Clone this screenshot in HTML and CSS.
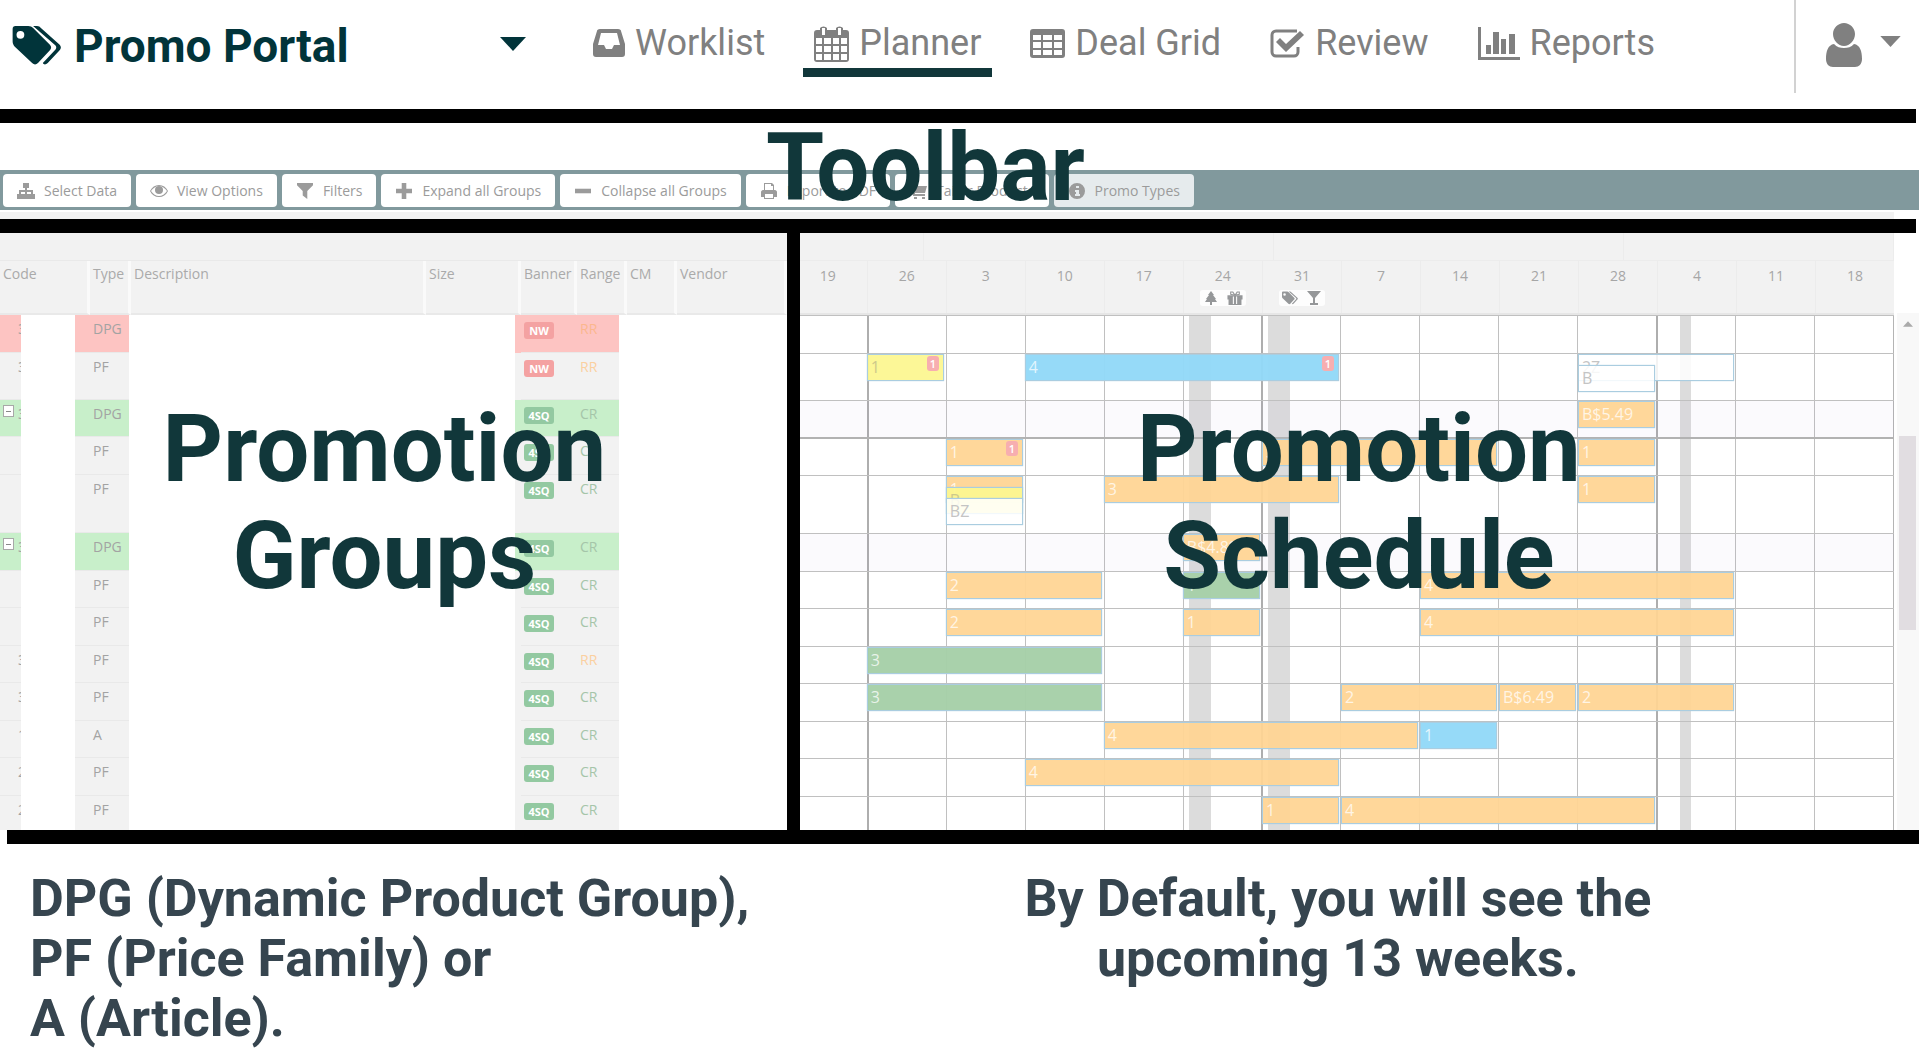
FILE: index.html
```html
<!DOCTYPE html>
<html lang="en">

<head>
    <meta charset="UTF-8">
    <meta name="viewport" content="width=device-width, initial-scale=1.0">
    <title>Promo Portal - Planner</title>
    <link rel="stylesheet" href="styles.css">
</head>

<body>
    <!-- Shared icons -->
    <svg class="sprite" aria-hidden="true">
        <symbol id="tags" viewBox="0 0 50 40">
            <path fill-rule="evenodd" d="M3 0h13c2 0 4 1 5 2l17 17c2 2 2 4 0 6L26 38c-2 2-4 2-6 0L2 21c-1-1-2-3-2-5V3c0-2 1-3 3-3zm5 5a4 4 0 1 0 0 8 4 4 0 0 0 0-8z" />
            <path d="M21 0h4c2 0 3 1 4 2l19 17c2 2 2 4 0 6L36 38c-2 2-4 2-5 0l13-14c1-1 1-3 0-4z" />
        </symbol>
        <symbol id="caret" viewBox="0 0 26 14"><path d="M0 0h26L13 14z" /></symbol>
        <symbol id="inbox" viewBox="0 0 32 28">
            <path fill-rule="evenodd" d="M7 0h18c2 0 3 1 3 2l4 13v10c0 2-1 3-3 3H3c-2 0-3-1-3-3V15L4 2c0-1 1-2 3-2zm1 4L5 16h6l2 4h6l2-4h6L24 4z" />
        </symbol>
        <symbol id="calendar" viewBox="0 0 35 37">
            <path fill-rule="evenodd" d="M3 5h3V3a4 3 0 0 1 7 0v2h9V3a4 3 0 0 1 7 0v2h3c2 0 3 1 3 3v26c0 2-1 3-3 3H3c-2 0-3-1-3-3V8c0-2 1-3 3-3zm5-2v7h3V3zm16 0v7h3V3zM2 13v6h6v-6zm8 0v6h7v-6zm9 0v6h6v-6zm8 0v6h6v-6zM2 21v6h6v-6zm8 0v6h7v-6zm9 0v6h6v-6zm8 0v6h6v-6zM2 29v6h6v-6zm8 0v6h7v-6zm9 0v6h6v-6zm8 0v6h6v-6z" />
        </symbol>
        <symbol id="grid" viewBox="0 0 35 29">
            <path fill-rule="evenodd" d="M3 0h29c2 0 3 1 3 3v23c0 2-1 3-3 3H3c-2 0-3-1-3-3V3c0-2 1-3 3-3zm0 6v5h8V6zm10 0v5h9V6zm11 0v5h8V6zM3 13v6h8v-6zm10 0v6h9v-6zm11 0v6h8v-6zM3 21v5h8v-5zm10 0v5h9v-5zm11 0v5h8v-5z" />
        </symbol>
        <symbol id="check" viewBox="0 0 35 29">
            <path d="M27 2H6a4 4 0 0 0-4 4v17a4 4 0 0 0 4 4h18a4 4 0 0 0 4-4v-5" fill="none" stroke="currentColor" stroke-width="3" />
            <path d="M6 13l4-4 6 6L30 2l4 4-18 17z" />
        </symbol>
        <symbol id="bars" viewBox="0 0 42 33">
            <path d="M0 0h3v30h39v3H0zM8 18h5v9H8zM15 5h6v22h-6zM23 12h5v15h-5zM31 7h6v20h-6z" />
        </symbol>
        <symbol id="user" viewBox="0 0 36 44">
            <path d="M18 0c6 0 11 5 11 11s-5 12-11 12S7 17 7 11 12 0 18 0zM8 21c3 3 6 4 10 4s7-1 10-4c6 1 8 7 8 15 0 5-3 8-7 8H7c-4 0-7-3-7-8 0-8 2-14 8-15z" />
        </symbol>
        <symbol id="sitemap" viewBox="0 0 18 16">
            <path d="M6 0h6v5h-2v2h6v4h2v5h-6v-5h2V9h-4v2h2v5H6v-5h2V9H4v2h2v5H0v-5h2V7h6V5H6z" />
        </symbol>
        <symbol id="eye" viewBox="0 0 18 14">
            <path fill-rule="evenodd" d="M9 1c4 0 7 2 9 6-2 4-5 6-9 6S2 11 0 7c2-4 5-6 9-6zm0 1C6 2 3 4 1 7c2 3 5 5 8 5s6-2 8-5c-2-3-5-5-8-5z" />
            <circle cx="9" cy="6" r="4" />
        </symbol>
        <symbol id="filter" viewBox="0 0 14 14"><path d="M0 0h14v2L9 7v7l-4-3V7L0 2z" /></symbol>
        <symbol id="plus" viewBox="0 0 14 14"><path d="M5 0h4v5h5v4H9v5H5V9H0V5h5z" /></symbol>
        <symbol id="minus" viewBox="0 0 14 14"><path d="M0 5h14v4H0z" /></symbol>
        <symbol id="print" viewBox="0 0 16 16">
            <path fill-rule="evenodd" d="M3 0h8l2 2v5h1c1 0 2 1 2 2v5h-3v2H3v-2H0V9c0-1 1-2 2-2h1zm1 1v6h8V3h-2V1zm0 10v4h8v-4z" />
        </symbol>
        <symbol id="cart" viewBox="0 0 18 16">
            <path d="M0 1h4l1 2h13l-2 7H6v1h10v2H4L3 3H0zM5 14h3v2H5zM13 14h3v2h-3z" />
        </symbol>
        <symbol id="info" viewBox="0 0 16 16">
            <path fill-rule="evenodd" d="M8 0a8 8 0 1 0 0 16A8 8 0 0 0 8 0zM7 3h3v2H7zM6 7h4v4h1v2H6v-2h1V9H6z" />
        </symbol>
        <symbol id="tree" viewBox="0 0 12 14"><path d="M6 0l3 4H8l3 4h-1l2 3H7v3H5v-3H0l2-3H1l3-4H3z" /></symbol>
        <symbol id="gift" viewBox="0 0 14 13">
            <path fill-rule="evenodd" d="M0 4h14v4h-1v5H1V8H0zm5 1v7h1V5zm3 0v7h1V5z" />
            <path d="M7 4L5 1H3v2l4 1 4-1V1H9z" fill="none" stroke="currentColor" />
        </symbol>
        <symbol id="glass" viewBox="0 0 14 14"><path d="M0 0h14L8 7v5h3v2H3v-2h3V7z" /></symbol>
    </svg>

    <header class="navbar">
        <a class="brand" href="#"><svg class="i-brand"><use href="#tags" /></svg>Promo Portal</a>
        <button class="brand-menu" aria-label="Switch portal"><svg class="i-caret"><use href="#caret" /></svg></button>
        <nav class="nav">
            <a href="#"><svg class="i-inbox"><use href="#inbox" /></svg>Worklist</a>
            <a href="#" class="active"><svg class="i-calendar"><use href="#calendar" /></svg>Planner</a>
            <a href="#"><svg class="i-grid"><use href="#grid" /></svg>Deal Grid</a>
            <a href="#"><svg class="i-grid"><use href="#check" /></svg>Review</a>
            <a href="#"><svg class="i-bars"><use href="#bars" /></svg>Reports</a>
        </nav>
        <button class="user-menu" aria-label="Account">
            <svg class="i-user"><use href="#user" /></svg>
            <svg class="i-user-caret"><use href="#caret" /></svg>
        </button>
    </header>
    <hr>

    <section class="toolbar-section">
        <div class="toolbar">
            <button><svg><use href="#sitemap" /></svg>Select Data</button>
            <button><svg><use href="#eye" /></svg>View Options</button>
            <button><svg><use href="#filter" /></svg>Filters</button>
            <button><svg><use href="#plus" /></svg>Expand all Groups</button>
            <button><svg><use href="#minus" /></svg>Collapse all Groups</button>
            <button><svg><use href="#print" /></svg>Export to PDF</button>
            <button><svg><use href="#cart" /></svg>Tailor Products</button>
            <button class="pressed"><svg><use href="#info" /></svg>Promo Types</button>
        </div>
        <h2 class="callout callout-toolbar">Toolbar</h2>
    </section>
    <hr>

    <main class="planner">
        <section class="groups">
            <table>
                <colgroup>
                    <col class="c-code"><col class="c-type"><col class="c-desc"><col class="c-size">
                    <col class="c-banner"><col class="c-range"><col class="c-cm"><col>
                </colgroup>
                <thead>
                    <tr class="months"><td colspan="8"></td></tr>
                    <tr>
                        <th>Code</th><th>Type</th><th>Description</th><th>Size</th>
                        <th>Banner</th><th>Range</th><th>CM</th><th>Vendor</th>
                    </tr>
                </thead>
                <tbody>
                    <tr class="red first"><td class="code"><span>3</span></td><td class="type">DPG</td><td></td><td class="size"></td><td class="banner"><b class="nw">NW</b></td><td class="range rr">RR</td><td></td><td></td></tr>
                    <tr class="tall"><td class="code"><span>3</span></td><td class="type">PF</td><td></td><td class="size"></td><td class="banner"><b class="nw">NW</b></td><td class="range rr">RR</td><td></td><td></td></tr>
                    <tr class="green"><td class="code"><button class="toggle" aria-label="Collapse group"></button><span>3</span></td><td class="type">DPG</td><td></td><td class="size"></td><td class="banner"><b>4SQ</b></td><td class="range">CR</td><td></td><td></td></tr>
                    <tr><td class="code"></td><td class="type">PF</td><td></td><td class="size"></td><td class="banner"><b>4SQ</b></td><td class="range">CR</td><td></td><td></td></tr>
                    <tr class="taller"><td class="code"></td><td class="type">PF</td><td></td><td class="size"></td><td class="banner"><b>4SQ</b></td><td class="range">CR</td><td></td><td></td></tr>
                    <tr class="green"><td class="code"><button class="toggle" aria-label="Collapse group"></button><span>3</span></td><td class="type">DPG</td><td></td><td class="size"></td><td class="banner"><b>4SQ</b></td><td class="range">CR</td><td></td><td></td></tr>
                    <tr><td class="code"></td><td class="type">PF</td><td></td><td class="size"></td><td class="banner"><b>4SQ</b></td><td class="range">CR</td><td></td><td></td></tr>
                    <tr><td class="code"></td><td class="type">PF</td><td></td><td class="size"></td><td class="banner"><b>4SQ</b></td><td class="range">CR</td><td></td><td></td></tr>
                    <tr><td class="code"><span>3</span></td><td class="type">PF</td><td></td><td class="size"></td><td class="banner"><b>4SQ</b></td><td class="range rr">RR</td><td></td><td></td></tr>
                    <tr><td class="code"><span>3</span></td><td class="type">PF</td><td></td><td class="size"></td><td class="banner"><b>4SQ</b></td><td class="range">CR</td><td></td><td></td></tr>
                    <tr><td class="code"><span>1</span></td><td class="type">A</td><td></td><td class="size"></td><td class="banner"><b>4SQ</b></td><td class="range">CR</td><td></td><td></td></tr>
                    <tr><td class="code"><span>2</span></td><td class="type">PF</td><td></td><td class="size"></td><td class="banner"><b>4SQ</b></td><td class="range">CR</td><td></td><td></td></tr>
                    <tr><td class="code"><span>2</span></td><td class="type">PF</td><td></td><td class="size"></td><td class="banner"><b>4SQ</b></td><td class="range">CR</td><td></td><td></td></tr>
                </tbody>
            </table>
            <h2 class="callout">Promotion<br>Groups</h2>
        </section>

        <section class="schedule">
            <div class="timeline">
                <div class="month-row"><span></span><span></span><span></span><span></span></div>
                <div class="weeks">
                    <div>19</div>
                    <div>26</div>
                    <div>3</div>
                    <div>10</div>
                    <div>17</div>
                    <div>24<p><svg><use href="#tree" /></svg><svg><use href="#gift" /></svg></p></div>
                    <div>31<p><svg><use href="#tags" /></svg><svg><use href="#glass" /></svg></p></div>
                    <div>7</div>
                    <div>14</div>
                    <div>21</div>
                    <div>28</div>
                    <div>4</div>
                    <div>11</div>
                    <div>18</div>
                </div>
                <div class="chart">
                    <!-- Week lines and holiday bands -->
                    <div class="lines">
                        <i></i><i class="month"></i><i></i><i></i><i></i><i><s></s></i><i class="month"><s></s></i>
                        <i></i><i></i><i></i><i></i><i class="month"><s class="late"></s></i><i></i><i></i>
                    </div>
                    <div class="row"></div>
                    <div class="row">
                        <div class="bar yellow w2">1<em>1</em></div>
                        <div class="bar blue w4 s4">4<em>1</em></div>
                        <div class="bar white w11 s2">2Z</div>
                        <div class="bar white w11 drop1">B</div>
                    </div>
                    <div class="row group">
                        <div class="bar w11">B$5.49</div>
                    </div>
                    <div class="row strong">
                        <div class="bar w3">1<em>1</em></div>
                        <div class="bar w7 s3">3</div>
                        <div class="bar w11">1</div>
                    </div>
                    <div class="row">
                        <div class="bar w3">1</div>
                        <div class="bar yellow w3 drop1">B</div>
                        <div class="bar white w3 drop2">BZ</div>
                        <div class="bar w5 s3">3</div>
                        <div class="bar w11">1</div>
                    </div>
                    <div class="row group">
                        <div class="bar w6">B$4.89</div>
                    </div>
                    <div class="row">
                        <div class="bar w3 s2">2</div>
                        <div class="bar green w6">1</div>
                        <div class="bar w9 s4">4</div>
                    </div>
                    <div class="row">
                        <div class="bar w3 s2">2</div>
                        <div class="bar w6">1</div>
                        <div class="bar w9 s4">4</div>
                    </div>
                    <div class="row">
                        <div class="bar green w2 s3">3</div>
                    </div>
                    <div class="row">
                        <div class="bar green w2 s3">3</div>
                        <div class="bar w8 s2">2</div>
                        <div class="bar w10">B$6.49</div>
                        <div class="bar w11 s2">2</div>
                    </div>
                    <div class="row">
                        <div class="bar w5 s4">4</div>
                        <div class="bar blue w9">1</div>
                    </div>
                    <div class="row">
                        <div class="bar w4 s4">4</div>
                    </div>
                    <div class="row">
                        <div class="bar w7">1</div>
                        <div class="bar w8 s4">4</div>
                    </div>
                </div>
            </div>
            <div class="scrollbar"><svg><use href="#caret" /></svg><div class="thumb"></div></div>
            <h2 class="callout">Promotion<br>Schedule</h2>
        </section>
    </main>
    <hr class="bottom">

    <footer class="notes">
        <p>DPG (Dynamic Product Group),<br>PF (Price Family) or<br>A (Article).</p>
        <p class="centered">By Default, you will see the<br>upcoming 13 weeks.</p>
    </footer>
</body>

</html>
```
FILE: styles.css
```css
* {
    box-sizing: border-box;
}

body {
    margin: 0;
    background-color: #fff;
    font-family: "Open Sans", "Noto Sans", sans-serif;
    font-size: 14px;
    color: #a3a3a3;
    overflow-x: hidden;
}

button {
    border: none;
    background: none;
    padding: 0;
    font: inherit;
    color: inherit;
    cursor: pointer;
}

a {
    color: inherit;
    text-decoration: none;
}

svg {
    fill: currentColor;
    display: block;
}

hr {
    height: 14px;
    margin: 0 3px 0 0;
    border: none;
    background-color: #000;
}

hr.bottom {
    margin: 0 0 0 7px;
}

.sprite {
    position: absolute;
    width: 0;
    height: 0;
}

/* Navigation */
.navbar {
    display: flex;
    align-items: flex-start;
    height: 109px;
    font-family: Roboto, sans-serif;
    color: #808080;
}

.brand {
    display: flex;
    align-items: center;
    gap: 12px;
    width: 500px;
    height: 92px;
    padding-left: 12px;
    font-size: 46px;
    font-weight: 700;
    color: #01343a;
}

.brand-menu {
    height: 88px;
    color: #01343a;
}

.nav {
    display: flex;
    gap: 27px;
    margin-left: 56px;
    font-size: 36px;
}

.nav a {
    display: flex;
    align-items: center;
    gap: 10px;
    height: 77px;
    padding: 18px 11px 0;
    border-bottom: 9px solid transparent;
    white-space: nowrap;
}

.nav a.active {
    border-color: #11373a;
}

.user-menu {
    display: flex;
    align-items: center;
    gap: 18px;
    height: 93px;
    margin-left: auto;
    padding: 0 18px 4px 30px;
    border-left: 2px solid #d2d2d2;
}

.i-brand { width: 50px; height: 39px; margin-bottom: 2px; }
.i-caret { width: 26px; height: 14px; }
.i-inbox { width: 32px; height: 28px; }
.i-calendar { width: 35px; height: 37px; }
.i-grid { width: 35px; height: 29px; }
.i-bars { width: 42px; height: 33px; }
.i-user { width: 36px; height: 44px; }
.i-user-caret { width: 21px; height: 11px; margin-bottom: 6px; }

/* Toolbar */
.toolbar-section {
    position: relative;
    height: 96px;
    padding-top: 47px;
    background: linear-gradient(#f2f2f2, #f2f2f2) 0 100% / calc(100% - 25px) 7px no-repeat;
}

.toolbar {
    display: flex;
    gap: 5px;
    height: 40px;
    padding: 4px 3px;
    background-color: #81999d;
}

.toolbar button {
    display: flex;
    align-items: center;
    gap: 9px;
    height: 33px;
    padding: 0 14px;
    border-radius: 4px;
    background-color: #fff;
    color: #9b9b9b;
    white-space: nowrap;
}

.toolbar button.pressed {
    background-color: #e6ebed;
}

.toolbar svg {
    width: 18px;
    height: 16px;
}

/* Large labels lying over each area */
.callout {
    position: absolute;
    top: 163px;
    left: 0;
    right: 0;
    z-index: 3;
    margin: 0;
    text-align: center;
    font: 700 94px/107px Roboto, sans-serif;
    color: #11373a;
    pointer-events: none;
}

.callout-toolbar {
    top: -8px;
    padding-right: 68px;
}

.groups .callout {
    padding-right: 18px;
}

.schedule .callout {
    padding-left: 12px;
}

/* Planner */
.planner {
    display: grid;
    grid-template-columns: minmax(0, 41fr) minmax(0, 59fr);
    height: 597px;
    overflow: hidden;
}

.groups,
.schedule {
    position: relative;
}

.groups table {
    width: 100%;
    table-layout: fixed;
    border-collapse: separate;
    border-spacing: 0;
}

.c-code { width: 90px; }
.c-type { width: 41px; }
.c-desc { width: 295px; }
.c-size { width: 95px; }
.c-banner { width: 56px; }
.c-range { width: 50px; }
.c-cm { width: 50px; }

.groups th {
    height: 54px;
    padding: 3px 3px 0;
    border-right: 3px solid #fafafa;
    border-bottom: 2px solid #e9e9e9;
    background-color: #f2f2f2;
    text-align: left;
    vertical-align: top;
    font-weight: 400;
    line-height: 20px;
    white-space: nowrap;
    color: #aaa;
}

.groups .months td {
    height: 28px;
    border-bottom: 1px solid #e9e9e9;
    background-color: #f2f2f2;
}

.groups td {
    padding: 4px 3px 0;
    vertical-align: top;
    line-height: 20px;
}

.groups tbody tr {
    --row: #f2f2f2;
    height: 38px;
}

.groups tbody tr:nth-child(odd) { height: 37px; }
.groups tbody tr.first { height: 38px; }
.groups tbody tr.tall { height: 47px; }
.groups tbody tr.taller { height: 58px; }
.groups tbody tr.red { --row: #fdc4c2; }
.groups tbody tr.green { --row: #c8efca; }

.groups .code {
    padding: 4px 0 0;
    background: linear-gradient(#fff, #fff) 21px 0 / 54px 100% no-repeat,
        linear-gradient(#e9e9e9, #e9e9e9) 0 100% / 100% 1px no-repeat, var(--row);
}

.groups .code span {
    display: block;
    width: 21px;
    padding-left: 18px;
    overflow: hidden;
}

.toggle {
    float: left;
    width: 11px;
    height: 12px;
    margin: 1px -14px 0 3px;
    border: 1px solid #a8a8a8;
    background: linear-gradient(#888, #888) 50% 50% / 5px 1px no-repeat #fff;
}

.groups .banner {
    background: linear-gradient(#e9e9e9, #e9e9e9) 0 100% / 100% 1px no-repeat, var(--row);
}

.groups .type {
    background: linear-gradient(#fff, #fff) 100% 0 / 2px 100% no-repeat,
        linear-gradient(#e9e9e9, #e9e9e9) 0 100% / 100% 1px no-repeat, var(--row);
}

.groups .size {
    background: linear-gradient(#fff, #fff) 0 0 / 89px 100% no-repeat, var(--row);
}

.groups .range {
    background: linear-gradient(#fff, #fff) 100% 0 / 8px 100% no-repeat,
        linear-gradient(#e9e9e9, #e9e9e9) 0 100% / 100% 1px no-repeat, var(--row);
    color: #a5c5a9;
}

.groups .range.rr {
    color: #fbd0a0;
}

.groups .red .range.rr {
    color: #fbb78e;
}

.banner b {
    display: block;
    width: 30px;
    height: 17px;
    margin-top: 3px;
    border-radius: 3px;
    background-color: #93c9a1;
    text-align: center;
    font-size: 11px;
    line-height: 17px;
    color: #fff;
}

.banner b.nw {
    background-color: #f4a2a2;
}

/* Schedule */
.schedule {
    display: flex;
    padding-left: 1px;
}

.schedule::before {
    content: "";
    position: absolute;
    top: 0;
    bottom: 0;
    left: 0;
    z-index: 2;
    width: 13px;
    background-color: #000;
}

.timeline {
    flex: 1;
    min-width: 0;
}

.month-row {
    display: grid;
    grid-template-columns: 136px 350px 350px 1fr;
    height: 28px;
    border-bottom: 1px solid #ececec;
    background-color: #f2f2f2;
}

.month-row span {
    border-right: 1px solid #ececec;
}

.weeks {
    display: grid;
    grid-template-columns: repeat(14, minmax(0, 1fr));
    height: 54px;
    border-bottom: 2px solid #e6e6e6;
    background-color: #f2f2f2;
    text-align: center;
    line-height: 29px;
    color: #a6a6a6;
}

.weeks div {
    border-left: 1px solid #ececec;
}

.weeks p {
    display: flex;
    justify-content: center;
    gap: 8px;
    width: 46px;
    height: 16px;
    margin: 0 auto;
    padding: 1px 0;
    border-radius: 3px;
    background-color: #fdfdfd;
    color: #959799;
}

.weeks svg {
    width: 16px;
    height: 14px;
}

.chart {
    position: relative;
    display: grid;
    grid-template-rows: 38px 47px 37px 38px 58px 38px 37px 38px 37px 38px 37px 38px 37px;
}

.lines {
    position: absolute;
    inset: 0;
    display: grid;
    grid-template-columns: repeat(14, minmax(0, 1fr));
    border-right: 1px solid #b4b4b4;
}

.lines i {
    border-left: 1px solid #c0c0c0;
}

.lines i.month {
    border-left: 2px solid #aeaeae;
}

.lines s {
    display: block;
    width: 22px;
    height: 100%;
    margin-left: 5px;
    background-color: #dcdcdc;
}

.lines s.late {
    width: 11px;
    margin-left: 22px;
}

.row {
    position: relative;
    display: grid;
    grid-template-columns: repeat(14, minmax(0, 1fr));
    grid-template-rows: 27px;
    border-top: 1px solid #c0c0c0;
}

.row.group {
    background-color: rgba(120, 90, 200, 0.03);
}

.row.strong {
    border-top: 2px solid #b2b2b2;
}

/* --week is the first week of a bar, --span is how many weeks it runs */
.bar {
    position: relative;
    grid-row: 1;
    grid-column: var(--week) / span var(--span, 1);
    margin-right: 2px;
    padding-left: 3px;
    border: 1px solid #aacde0;
    background-color: rgba(255, 212, 148, 0.94);
    box-shadow: 0 0 1px #aacde0;
    font-size: 16px;
    line-height: 24px;
    white-space: nowrap;
    color: rgba(255, 255, 255, 0.75);
}

.bar.yellow {
    background-color: rgba(252, 246, 145, 0.94);
    color: #cdc98c;
}

.bar.blue {
    background-color: rgba(146, 217, 248, 0.96);
}

.bar.green {
    background-color: rgba(166, 207, 168, 0.96);
}

.bar.white {
    background-color: rgba(255, 255, 255, 0.85);
    color: #c4c4c4;
}

.bar em {
    position: absolute;
    top: 1px;
    right: 4px;
    width: 12px;
    height: 15px;
    border-radius: 3px;
    background-color: #f7aeb0;
    text-align: center;
    font-size: 11px;
    font-style: normal;
    font-weight: 600;
    line-height: 15px;
    color: #fff;
}

.bar.drop1 { margin-top: 11px; margin-bottom: -11px; }
.bar.drop2 { margin-top: 22px; margin-bottom: -22px; }

.w2 { --week: 2; }
.w3 { --week: 3; }
.w4 { --week: 4; }
.w5 { --week: 5; }
.w6 { --week: 6; }
.w7 { --week: 7; }
.w8 { --week: 8; }
.w9 { --week: 9; }
.w10 { --week: 10; }
.w11 { --week: 11; }
.s2 { --span: 2; }
.s3 { --span: 3; }
.s4 { --span: 4; }

.scrollbar {
    width: 22px;
    margin: 80px 0 0 3px;
    background-color: #f8f8f8;
    color: #aaa;
}

.scrollbar svg {
    width: 10px;
    height: 6px;
    margin: 8px 0 0 6px;
    transform: rotate(180deg);
}

.thumb {
    width: 17px;
    height: 194px;
    margin: 109px 0 0 2px;
    background-color: #e1dde1;
}

/* Notes */
.notes {
    display: grid;
    grid-template-columns: minmax(0, 41fr) minmax(0, 59fr);
    padding-top: 25px;
    font: 700 52px/60px Roboto, sans-serif;
    color: #36454f;
}

.notes p {
    margin: 0;
    padding-left: 30px;
    white-space: nowrap;
}

.notes .centered {
    padding: 0 30px 0 0;
    text-align: center;
}
```
